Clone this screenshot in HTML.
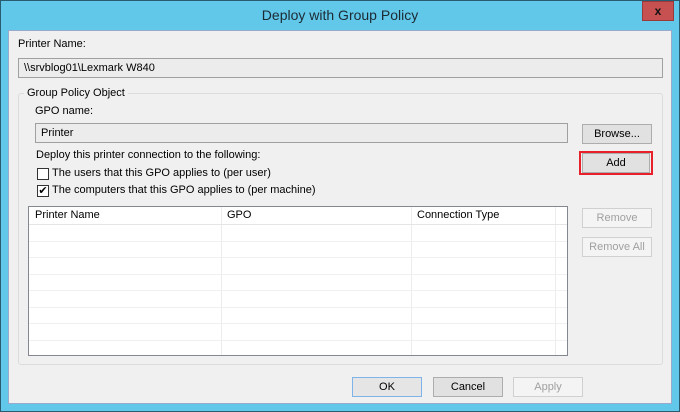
<!DOCTYPE html>
<html><head><style>
*{margin:0;padding:0;box-sizing:border-box}
body{width:680px;height:412px;background:#62c8ea;font-family:"Liberation Sans",sans-serif;font-size:11px;color:#000;position:relative;overflow:hidden}
.frame{position:absolute;left:0;top:0;width:680px;height:412px;border:1px solid #2b5b70}
.title{position:absolute;left:0;top:7px;width:680px;text-align:center;font-size:14px;color:#1b2a33}
.close{position:absolute;left:642px;top:1px;width:32px;height:20px;background:#c75050;border:1px solid #9a3a3a;color:#111;font-weight:bold;font-size:12px;text-align:center;line-height:18px}
.body{position:absolute;left:8px;top:30px;width:664px;height:374px;background:#f0f0f0;border:1px solid #9ac}
.a{position:absolute}
.inp{position:absolute;background:#ececec;border:1px solid #a0a0a0;padding:3px 5px;height:20px}
.btn{position:absolute;background:#e1e1e1;border:1px solid #adadad;text-align:center;line-height:18px;height:20px}
.dis{color:#a0a0a0;background:#f4f4f4;border-color:#d0d0d0}
.cb{position:absolute;width:12px;height:12px;border:1px solid #333;background:#fff}
.grp{position:absolute;left:18px;top:93px;width:645px;height:272px;border:1px solid #dcdcdc;border-radius:3px}
.tbl{position:absolute;left:28px;top:206px;width:540px;height:150px;background:#fff;border:1px solid #828790;overflow:hidden}
.vl{position:absolute;top:0;bottom:0;width:1px;background:#ececec}
.hl{position:absolute;left:0;right:0;height:1px;background:#f0f0f0}
</style></head><body>
<div class="frame"></div>
<div class="title">Deploy with Group Policy</div>
<div class="close">x</div>
<div class="body"></div>
<div class="a" style="left:18px;top:38px">Printer Name:</div>
<div class="inp" style="left:18px;top:58px;width:645px">\\srvblog01\Lexmark W840</div>
<div class="grp"></div>
<div class="a" style="left:24px;top:87px;background:#f0f0f0;padding:0 3px">Group Policy Object</div>
<div class="a" style="left:35px;top:105px">GPO name:</div>
<div class="inp" style="left:35px;top:123px;width:533px">Printer</div>
<div class="btn" style="left:582px;top:124px;width:70px">Browse...</div>
<div class="a" style="left:579px;top:151px;width:74px;height:24px;border:2px solid #e8202a"></div>
<div class="btn" style="left:582px;top:153px;width:68px">Add</div>
<div class="a" style="left:36px;top:149px">Deploy this printer connection to the following:</div>
<div class="cb" style="left:37px;top:168px"></div>
<div class="a" style="left:52px;top:167px">The users that this GPO applies to (per user)</div>
<div class="cb" style="left:37px;top:185px;font-size:11px;line-height:10px;text-align:center">&#10004;</div>
<div class="a" style="left:52px;top:184px">The computers that this GPO applies to (per machine)</div>
<div class="tbl">
<div class="vl" style="left:192px"></div><div class="vl" style="left:382px"></div><div class="vl" style="left:526px"></div>
<div class="hl" style="top:17px;background:#e5e5e5"></div>
<div class="hl" style="top:34px"></div><div class="hl" style="top:50px"></div><div class="hl" style="top:67px"></div><div class="hl" style="top:83px"></div><div class="hl" style="top:100px"></div><div class="hl" style="top:116px"></div><div class="hl" style="top:133px"></div>
<div class="a" style="left:6px;top:2px">Printer Name</div>
<div class="a" style="left:198px;top:2px">GPO</div>
<div class="a" style="left:388px;top:2px">Connection Type</div>
</div>
<div class="btn dis" style="left:582px;top:208px;width:70px">Remove</div>
<div class="btn dis" style="left:582px;top:237px;width:70px">Remove All</div>
<div class="btn" style="left:352px;top:377px;width:70px;border-color:#7eb4ea;background:#e5e5e5">OK</div>
<div class="btn" style="left:433px;top:377px;width:70px">Cancel</div>
<div class="btn dis" style="left:513px;top:377px;width:70px">Apply</div>
</body></html>
